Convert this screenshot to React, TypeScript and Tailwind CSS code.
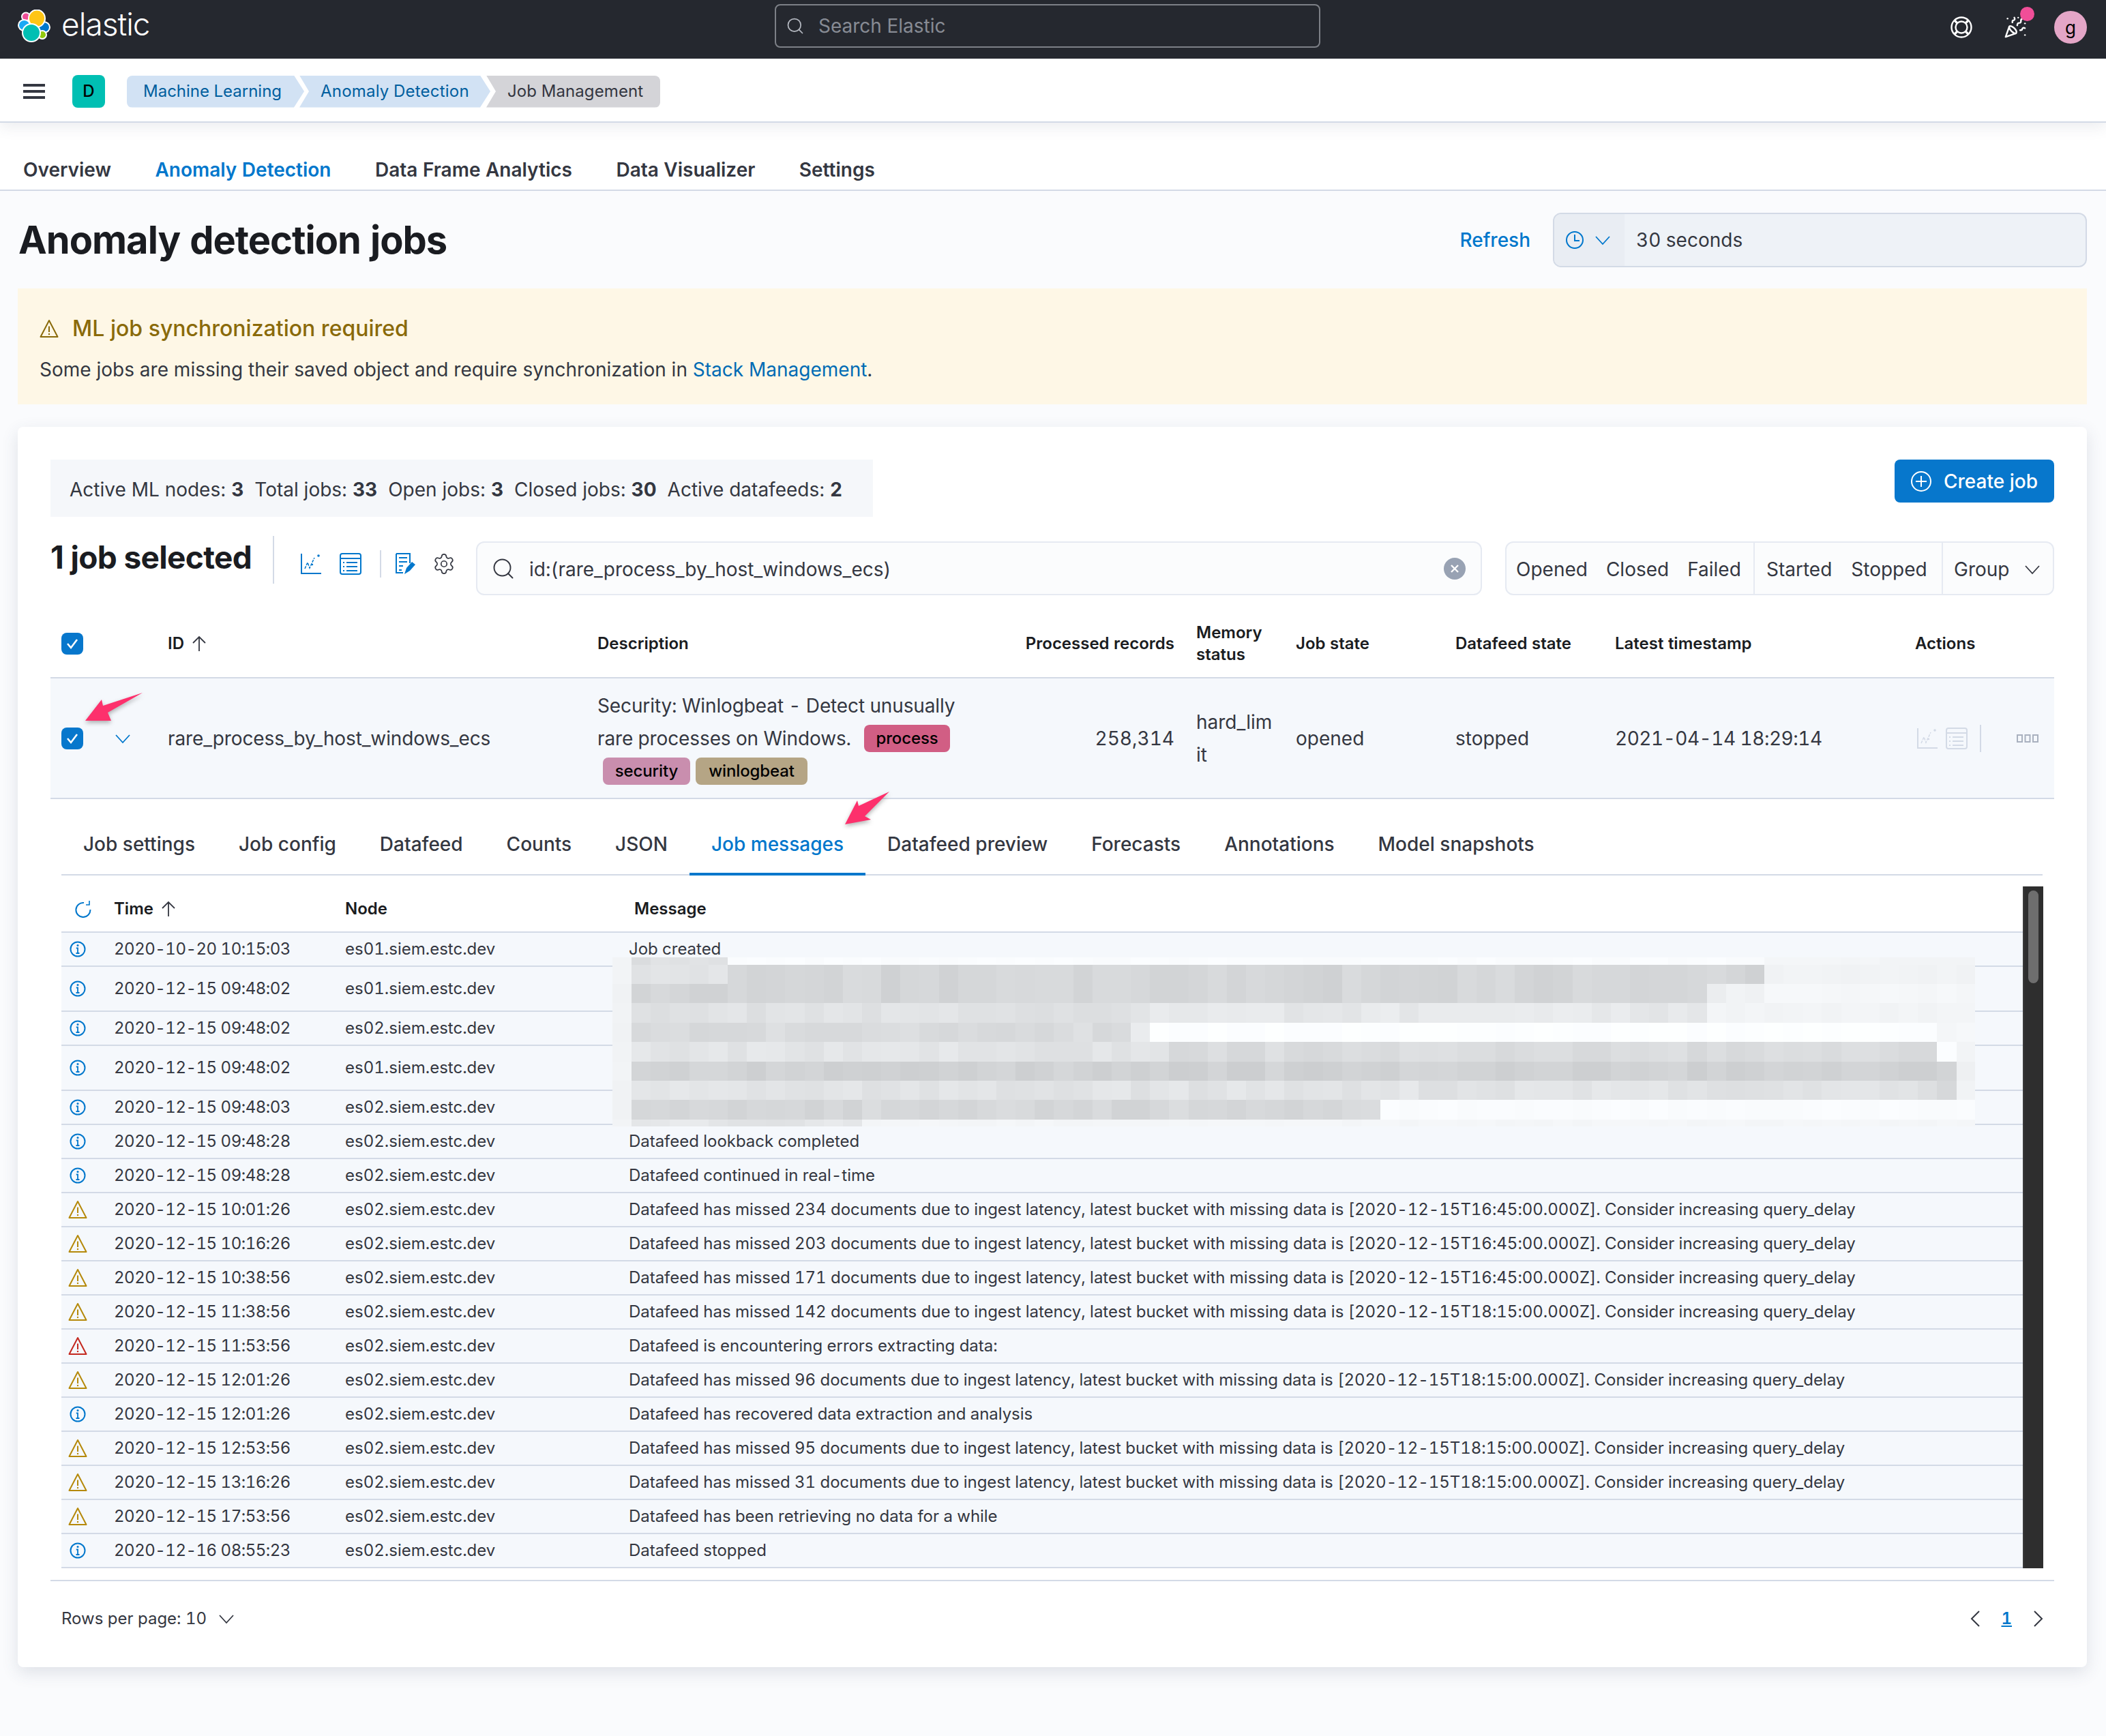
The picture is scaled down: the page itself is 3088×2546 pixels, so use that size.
import React from "react";
import { PartyPopper, Settings, Search } from "lucide-react";

const Chevron = ({ c = "#343741", s = 24 }: { c?: string; s?: number }) => (
  <svg width={s} height={s} viewBox="0 0 24 24" fill="none" stroke={c} strokeWidth="1.8"><path d="M2 7l10 11L22 7" /></svg>
);
const SortUp = () => (
  <svg width="24" height="24" viewBox="0 0 24 24" fill="none" stroke="#343741" strokeWidth="1.8"><path d="M12 2v21M3 11l9-9 9 9" /></svg>
);
const Info = () => (
  <svg width="24" height="24" viewBox="0 0 24 24" fill="none" stroke="#0077cc" strokeWidth="2">
    <circle cx="12" cy="12" r="10.5" />
    <path d="M9.8 10.5H12V18M9.5 18h5" strokeWidth="1.8" />
    <circle cx="12" cy="6.6" r="1.5" fill="#0077cc" stroke="none" />
  </svg>
);
const Triangle = ({ c, w = 28 }: { c: string; w?: number }) => (
  <svg width={w} height={w} viewBox="0 0 28 28" fill="none" stroke={c} strokeWidth="2" strokeLinejoin="round">
    <path d="M14 2L26.5 26H1.5z" />
    <path d="M14 10.5v8.5" />
    <circle cx="14" cy="22" r="1.2" fill={c} stroke="none" />
  </svg>
);
const ChartIcon = ({ c = "#0077cc" }: { c?: string }) => (
  <svg width="32" height="32" viewBox="0 0 32 32" fill="none" stroke={c} strokeWidth="2">
    <path d="M2 1v29h29" />
    <path d="M7 23l4-9 3 8 7-15" strokeWidth="1.5" strokeDasharray="4 1.5" />
    <circle cx="27" cy="4" r="1.8" fill={c} stroke="none" />
    <circle cx="18" cy="17" r="1.2" fill={c} stroke="none" />
  </svg>
);
const TableIcon = ({ c = "#0077cc" }: { c?: string }) => (
  <svg width="32" height="32" viewBox="0 0 32 32" fill="none" stroke={c} strokeWidth="2">
    <rect x="1" y="1" width="30" height="30" rx="3" />
    <path d="M1 8h30M10 14h16M10 20h16M10 26h16M5 14h2M5 20h2M5 26h2" />
  </svg>
);
const EditIcon = () => (
  <svg width="30" height="32" viewBox="0 0 30 32" fill="none" stroke="#0077cc" strokeWidth="2">
    <path d="M1 1h20v14M1 1v28h10" />
    <path d="M5 7h12M5 13h12M5 19h6M5 25h4" />
    <path d="M13 31l3-9 8-9 5 4-8 9z" fill="#0077cc" stroke="none" />
  </svg>
);
const Buoy = () => (
  <svg width="32" height="32" viewBox="0 0 32 32" fill="none" stroke="#fff" strokeWidth="2.4">
    <circle cx="16" cy="16" r="14.5" />
    <circle cx="16" cy="16" r="8.5" />
    <path d="M6 6l4 4M26 6l-4 4M6 26l4-4M26 26l-4-4" strokeWidth="3.2" />
  </svg>
);
const Logo = () => (
  <svg width="48" height="48" viewBox="0 0 48 48" className="shrink-0">
    <g stroke="#fff" strokeWidth="2">
      <ellipse cx="12" cy="10.5" rx="6" ry="6" fill="#f04e98" />
      <ellipse cx="9.5" cy="23" rx="8.5" ry="8" fill="#1ba9f5" />
      <ellipse cx="38" cy="26" rx="9" ry="8" fill="#0077cc" />
      <ellipse cx="36" cy="37" rx="6" ry="6" fill="#93c90e" />
      <ellipse cx="28" cy="13" rx="12" ry="12.5" fill="#fec514" />
      <ellipse cx="20" cy="34" rx="13" ry="13" fill="#00bfb3" />
    </g>
  </svg>
);

const hash = (a: number, b: number) => {
  const x = Math.sin(a * 127.1 + b * 311.7) * 43758.5453;
  return x - Math.floor(x);
};
const bands: { y: number; h: number; segs: [number, number, number][] }[] = [
  { y: 0, h: 11, segs: [[0, 1, 243], [1, 6, 222], [6, 60, 250], [60, 71, 243]] },
  { y: 11, h: 28, segs: [[0, 1, 241], [1, 6, 224], [6, 60, 212], [60, 61, 241], [61, 71, 241]] },
  { y: 39, h: 28, segs: [[0, 1, 241], [1, 57, 212], [57, 60, 236], [60, 71, 245]] },
  { y: 67, h: 29, segs: [[0, 1, 241], [1, 28, 224], [28, 57, 230], [57, 71, 242]] },
  { y: 96, h: 28, segs: [[0, 1, 241], [1, 27, 218], [27, 28, 232], [28, 69, 252], [69, 71, 245]] },
  { y: 124, h: 29, segs: [[0, 1, 241], [1, 29, 226], [29, 69, 218], [69, 70, 252], [70, 71, 241]] },
  { y: 153, h: 28, segs: [[0, 1, 241], [1, 70, 208], [70, 71, 234]] },
  { y: 181, h: 28, segs: [[0, 1, 241], [1, 69, 226], [69, 70, 214], [70, 71, 241]] },
  { y: 209, h: 29, segs: [[0, 1, 241], [1, 40, 214], [40, 71, 250]] },
  { y: 238, h: 10, segs: [[0, 1, 243], [1, 13, 228], [13, 71, 244]] },
];
const Mosaic = () => (
  <svg width="1998" height="248" viewBox="0 0 1998 248" shapeRendering="crispEdges" className="absolute left-[808px] top-[104px]">
    {bands.flatMap((b, bi) =>
      b.segs.flatMap(([s, e, g], si) =>
        Array.from({ length: e - s }, (_, k) => {
          const i = s + k;
          const n = Math.round((hash(i, bi + si) - 0.5) * (g >= 240 ? 3 : 10));
          const v = Math.min(253, g + n);
          return <rect key={`${bi}-${i}`} x={i * 28.15} y={b.y} width="28.6" height={b.h} fill={`rgb(${v},${v + 2},${v + 4})`} />;
        })
      )
    )}
  </svg>
);

const miss = (n: number, t: string) =>
  `Datafeed has missed ${n} documents due to ingest latency, latest bucket with missing data is [2020-12-15T${t}:00.000Z]. Consider increasing query_delay`;
const rows: [string, string, string, string, boolean][] = [
  ["i", "2020-10-20 10:15:03", "es01", "Job created", false],
  ["i", "2020-12-15 09:48:02", "es01", "", true],
  ["i", "2020-12-15 09:48:02", "es02", "", false],
  ["i", "2020-12-15 09:48:02", "es01", "", true],
  ["i", "2020-12-15 09:48:03", "es02", "", false],
  ["i", "2020-12-15 09:48:28", "es02", "Datafeed lookback completed", false],
  ["i", "2020-12-15 09:48:28", "es02", "Datafeed continued in real-time", false],
  ["w", "2020-12-15 10:01:26", "es02", miss(234, "16:45"), false],
  ["w", "2020-12-15 10:16:26", "es02", miss(203, "16:45"), false],
  ["w", "2020-12-15 10:38:56", "es02", miss(171, "16:45"), false],
  ["w", "2020-12-15 11:38:56", "es02", miss(142, "18:15"), false],
  ["e", "2020-12-15 11:53:56", "es02", "Datafeed is encountering errors extracting data:", false],
  ["w", "2020-12-15 12:01:26", "es02", miss(96, "18:15"), false],
  ["i", "2020-12-15 12:01:26", "es02", "Datafeed has recovered data extraction and analysis", false],
  ["w", "2020-12-15 12:53:56", "es02", miss(95, "18:15"), false],
  ["w", "2020-12-15 13:16:26", "es02", miss(31, "18:15"), false],
  ["w", "2020-12-15 17:53:56", "es02", "Datafeed has been retrieving no data for a while", false],
  ["i", "2020-12-16 08:55:23", "es02", "Datafeed stopped", false],
];
const subTabs = ["Job settings", "Job config", "Datafeed", "Counts", "JSON", "Job messages", "Datafeed preview", "Forecasts", "Annotations", "Model snapshots"];

const Check = () => (
  <div className="w-[32px] h-[32px] rounded-[8px] bg-[#0777cc] flex items-center justify-center">
    <svg width="20" height="20" viewBox="0 0 20 20" fill="none" stroke="#fff" strokeWidth="2.6"><path d="M3 10l5 6 9-12" /></svg>
  </div>
);

export default function App() {
  return (
    <div className="relative w-[3088px] h-[2546px] overflow-hidden bg-[#fafbfd] text-[#343741] tabular-nums [font-family:Inter,sans-serif]">
      {/* top bar */}
      <div className="h-[86px] bg-[#25282f] flex items-center">
        <div className="w-[1136px] pl-[26px] -mt-[10px] flex items-center gap-[16px]">
          <Logo />
          <span className="text-white text-[46px] font-light leading-none -mt-[6px] tracking-[-1px]">elastic</span>
        </div>
        <div className="w-[800px] h-[64px] -mt-[10px] border-2 border-[#7d8087] rounded-[8px] flex items-center pl-[14px] gap-[20px]">
          <Search size={28} strokeWidth={1.5} color="#b4b8c0" />
          <span className="text-[28px] text-[#878b94]">Search Elastic</span>
        </div>
        <div className="flex-1 -mt-[6px] flex items-center justify-end pr-[28px]">
          <Buoy />
          <div className="relative ml-[46px] mr-[40px]">
            <PartyPopper size={34} strokeWidth={1.7} color="#fff" />
            <div className="absolute -top-[13px] left-[24px] w-[21px] h-[21px] rounded-full bg-[#f04e98]" />
          </div>
          <div className="w-[48px] h-[48px] rounded-full bg-[#e4a6c7] flex items-center justify-center text-[26px] text-black">g</div>
        </div>
      </div>

      {/* breadcrumbs */}
      <div className="relative z-10 h-[94px] pt-[4px] bg-white border-b-2 border-[#d3dae6] shadow-[0_6px_20px_rgba(60,70,100,0.1)] flex items-center pl-[34px]">
        <div className="w-[32px] flex flex-col gap-[5px]">
          <div className="h-[4px] bg-[#343741]" />
          <div className="h-[4px] bg-[#343741]" />
          <div className="h-[4px] bg-[#343741]" />
        </div>
        <div className="ml-[40px] w-[48px] h-[48px] rounded-[8px] bg-[#00bfb3] flex items-center justify-center text-[24px] font-medium text-black">D</div>
        <div className="ml-[32px] flex items-center h-[47px] text-[24px]">
          <div className="w-[260px] h-full pl-[24px] flex items-center bg-[#d2e2f4] text-[#005e9e] rounded-l-[8px] [clip-path:polygon(0_0,245px_0,100%_50%,245px_100%,0_100%)]">Machine Learning</div>
          <div className="-ml-[7px] w-[280px] h-full pl-[31px] flex items-center bg-[#d2e2f4] text-[#005e9e] tracking-[0.2px] [clip-path:polygon(0_0,265px_0,100%_50%,265px_100%,0_100%,14px_50%)]">Anomaly Detection</div>
          <div className="-ml-[6px] w-[255px] h-full pl-[31px] flex items-center bg-[#d4d4d8] tracking-[0.1px] rounded-r-[8px] [clip-path:polygon(0_0,100%_0,100%_100%,0_100%,14px_50%)]">Job Management</div>
        </div>
      </div>

      {/* main tabs */}
      <div className="h-[100px] bg-white border-b-2 border-[#d3dae6] flex items-end gap-[64.5px] px-[34px] pb-[11px] text-[28px] font-semibold leading-[36px]">
        <span>Overview</span>
        <span className="text-[#0077cc]">Anomaly Detection</span>
        <span>Data Frame Analytics</span>
        <span>Data Visualizer</span>
        <span>Settings</span>
      </div>

      <div className="pl-[26px] pr-[28px]">
        {/* title */}
        <div className="h-[143px] flex items-center justify-between">
          <h1 className="text-[56px] font-bold text-[#1a1c21] tracking-[-1px] pl-[1px]">Anomaly detection jobs</h1>
          <div className="flex items-center">
            <span className="text-[28px] font-medium text-[#0077cc] mr-[33px]">Refresh</span>
            <div className="w-[783px] h-[80px] rounded-[12px] border-2 border-[#d3dae6] bg-[#eef2f7] flex items-center overflow-hidden">
              <div className="w-[103px] h-full bg-[#e9edf3] flex items-center pl-[17px] gap-[16px]">
                <svg width="26" height="26" viewBox="0 0 26 26" fill="none" stroke="#0077cc" strokeWidth="2"><circle cx="13" cy="13" r="12" /><path d="M13 5v9h7" /></svg>
                <Chevron c="#0077cc" />
              </div>
              <span className="pl-[17px] text-[28px]">30 seconds</span>
            </div>
          </div>
        </div>

        {/* callout */}
        <div className="h-[170px] bg-[#fef7e6] pl-[32px] pt-[40px]">
          <div className="flex items-center gap-[20px] h-[38px]">
            <Triangle c="#8a6a0a" />
            <span className="text-[32px] font-medium text-[#8a6a0a]">ML job synchronization required</span>
          </div>
          <div className="mt-[22px] text-[28px] leading-[38px] normal-nums">
            Some jobs are missing their saved object and require synchronization in <span className="text-[#006bb4]">Stack Management</span>.
          </div>
        </div>

        {/* panel */}
        <div className="mt-[33px] bg-white rounded-[8px] shadow-[0_8px_24px_rgba(60,70,100,0.14)] px-[48px] pt-[48px]">
          <div className="flex items-start justify-between">
            <div className="h-[84px] w-[1206px] pt-[3px] bg-[#f5f7fa] flex items-center pl-[28px] text-[28px] gap-[16px] normal-nums">
              <span>Active ML nodes: <b className="font-bold">3</b></span>
              <span>Total jobs: <b className="font-bold">33</b></span>
              <span>Open jobs: <b className="font-bold">3</b></span>
              <span>Closed jobs: <b className="font-bold">30</b></span>
              <span>Active datafeeds: <b className="font-bold">2</b></span>
            </div>
            <div className="w-[234px] h-[63px] rounded-[8px] bg-[#0777cc] flex items-center pl-[24px] gap-[18px] text-white text-[28px] font-medium">
              <svg width="30" height="30" viewBox="0 0 30 30" fill="none" stroke="#fff" strokeWidth="2"><circle cx="15" cy="15" r="14" /><path d="M15 7v16M7 15h16" /></svg>
              Create job
            </div>
          </div>

          {/* toolbar */}
          <div className="mt-[36px] h-[79px] flex items-start">
            <div className="-mt-[8px] w-[328px] h-[70px] border-r-2 border-[#d3dae6] flex items-start">
              <span className="text-[46px] font-bold text-[#1a1c21] leading-[46px] mt-[8px] tracking-[-0.65px] normal-nums">1 job selected</span>
            </div>
            <div className="w-[296px] h-[79px] pb-[14px] pl-[38px] flex items-center">
              <ChartIcon />
              <div className="ml-[26px]"><TableIcon /></div>
              <div className="ml-[27px] w-[2px] h-[40px] bg-[#d3dae6]" />
              <div className="ml-[21px]"><EditIcon /></div>
              <div className="ml-[24px]"><Settings size={34} strokeWidth={1.2} color="#343741" /></div>
            </div>
            <div className="w-[1475px] h-[79px] border-2 border-[#e6eaf2] rounded-[12px] bg-[#fbfcfd] flex items-center pl-[20px] pr-[22px]">
              <Search size={36} strokeWidth={1.3} color="#343741" className="shrink-0" />
              <span className="ml-[20px] pt-[2px] text-[28px] flex-1">id:(rare_process_by_host_windows_ecs)</span>
              <div className="w-[32px] h-[32px] rounded-full bg-[#98a2b3] flex items-center justify-center">
                <svg width="14" height="14" viewBox="0 0 14 14" stroke="#fff" strokeWidth="2.4"><path d="M2 2l10 10M12 2L2 12" /></svg>
              </div>
            </div>
            <div className="ml-[34px] flex-1 h-[79px] border-2 border-[#e6eaf2] rounded-[12px] bg-[#fbfcfd] flex items-stretch text-[28px]">
              <div className="w-[362px] pl-[14px] pt-[2px] flex items-center gap-[27px]"><span>Opened</span><span>Closed</span><span>Failed</span></div>
              <div className="w-[276px] border-l-2 border-[#e6eaf2] pl-[17px] pt-[2px] flex items-center gap-[28px]"><span>Started</span><span>Stopped</span></div>
              <div className="flex-1 border-l-2 border-[#e6eaf2] pl-[16px] pr-[18px] pt-[2px] flex items-center justify-between"><span>Group</span><Chevron /></div>
            </div>
          </div>

          {/* job table head */}
          <div className="mt-[22px] h-[100px] border-b-2 border-[#d3dae6] flex items-center pl-[16px] text-[24px] font-semibold text-[#1a1c21] leading-[32px]">
            <div className="w-[156px]"><Check /></div>
            <div className="w-[630px] flex items-center gap-[10px]">ID <SortUp /></div>
            <div className="w-[530px]">Description</div>
            <div className="w-[316px] text-right">Processed records</div>
            <div className="ml-[32px] w-[146px]">Memory<br />status</div>
            <div className="w-[234px]">Job state</div>
            <div className="w-[234px]">Datafeed state</div>
            <div className="w-[440px]">Latest timestamp</div>
            <div>Actions</div>
          </div>
          {/* job row */}
          <div className="h-[177px] bg-[#f5f8fc] border-b-2 border-[#d3dae6] flex items-center pl-[16px] text-[28px]">
            <div className="w-[78px]"><Check /></div>
            <div className="w-[78px]"><Chevron c="#0077cc" /></div>
            <div className="w-[630px] tracking-[-0.12px]">rare_process_by_host_windows_ecs</div>
            <div className="w-[530px] leading-[48px] tracking-[-0.12px]">
              <div className="h-[48px]">Security: Winlogbeat - Detect unusually</div>
              <div className="h-[48px] flex items-center">
                rare processes on Windows.
                <span className="ml-[19px] h-[40px] w-[126px] rounded-[8px] bg-[#d15e84] text-black text-[24px] font-medium flex items-center justify-center">process</span>
              </div>
              <div className="h-[48px] flex items-center gap-[8px] pl-[8px] text-black text-[24px] font-medium">
                <span className="h-[40px] w-[128px] rounded-[8px] bg-[#c98eae] flex items-center justify-center">security</span>
                <span className="h-[40px] w-[164px] rounded-[8px] bg-[#b5a585] flex items-center justify-center">winlogbeat</span>
              </div>
            </div>
            <div className="w-[316px] text-right">258,314</div>
            <div className="ml-[32px] w-[146px] leading-[48px]">hard_lim<br />it</div>
            <div className="w-[234px]">opened</div>
            <div className="w-[234px]">stopped</div>
            <div className="w-[440px] tracking-[-0.5px]">2021-04-14 18:29:14</div>
            <div className="flex items-center pl-[2px]">
              <ChartIcon c="#d3dae6" />
              <div className="ml-[11px]"><TableIcon c="#d3dae6" /></div>
              <div className="ml-[18px] w-[2px] h-[40px] bg-[#d3dae6]" />
              <svg className="ml-[52px]" width="32" height="12" viewBox="0 0 32 12" fill="none" stroke="#a9b1bf" strokeWidth="2"><rect x="1" y="1" width="7" height="10" /><rect x="12.5" y="1" width="7" height="10" /><rect x="24" y="1" width="7" height="10" /></svg>
            </div>
          </div>

          {/* sub tabs */}
          <div className="ml-[16px] w-[2905px] h-[112px] border-b-2 border-[#d3dae6] flex text-[28px] font-medium">
            {subTabs.map((t) => (
              <div key={t} className={t === "Job messages" ? "h-[112px] px-[32px] pt-[24px] flex items-center text-[#0077cc] border-b-4 border-[#0077cc]" : "h-[112px] px-[32px] pt-[20px] flex items-center"}>{t}</div>
            ))}
          </div>

          {/* messages table */}
          <div className="relative ml-[16px] mt-[16px] w-[2906px] flex">
            <div className="w-[2876px] text-[24px]">
              <div className="h-[68px] border-b-2 border-[#d3dae6] flex items-center font-semibold text-[#1a1c21]">
                <div className="w-[77px] pl-[20px]">
                  <svg width="24" height="26" viewBox="0 0 24 26" fill="none" stroke="#0077cc" strokeWidth="2"><path d="M13 4.1A10.5 10.5 0 1 0 22.4 14" /><path d="M21 1v6h-5" strokeWidth="1.6" /></svg>
                </div>
                <div className="w-[339px] flex items-center gap-[10px]">Time <SortUp /></div>
                <div className="w-[424px]">Node</div>
                <div>Message</div>
              </div>
              {rows.map(([k, time, node, msg, tall], i) => (
                <div key={i} className={tall ? "h-[66px] bg-[#f5f8fc] border-b-2 border-[#d3dae6] flex items-center" : "h-[50px] bg-[#f5f8fc] border-b-2 border-[#d3dae6] flex items-center"}>
                  <div className="w-[77px] pl-[10px] flex items-center">
                    {k === "i" ? <div className="pl-[2px]"><Info /></div> : <Triangle c={k === "w" ? "#b5890a" : "#c4281f"} />}
                  </div>
                  <div className="w-[339px] tracking-[-0.5px]">{time}</div>
                  <div className="w-[416px]">{node}.siem.estc.dev</div>
                  <div className="whitespace-nowrap tracking-[-0.03px]">{msg}</div>
                </div>
              ))}
            </div>
            <div className="w-[30px] bg-[#2e2e2e] border-l-2 border-[#3a3a3a] pt-[6px] pl-[6px]">
              <div className="w-[15px] h-[136px] rounded-full bg-[#6e6e6e]" />
            </div>
            <Mosaic />
          </div>

          {/* footer */}
          <div className="mt-[17px] h-[111px] border-t-2 border-[#d3dae6] flex items-center justify-between pl-[16px] pr-[15px] text-[24px]">
            <div className="flex items-center gap-[17px]">
              <span>Rows per page: 10</span>
              <Chevron />
            </div>
            <div className="flex items-center">
              <svg width="16" height="26" viewBox="0 0 16 26" fill="none" stroke="#343741" strokeWidth="2"><path d="M14 2L3 13l11 11" /></svg>
              <span className="ml-[30px] mr-[31px] text-[#0077cc] font-semibold underline">1</span>
              <svg width="16" height="26" viewBox="0 0 16 26" fill="none" stroke="#343741" strokeWidth="2"><path d="M2 2l11 11L2 24" /></svg>
            </div>
          </div>
          <div className="h-[17px]" />
        </div>
      </div>

      {/* annotation arrows */}
      <svg className="absolute left-[120px] top-[1010px] drop-shadow-[0_3px_3px_rgba(0,0,0,0.3)]" width="95" height="55" viewBox="0 0 95 55">
        <polygon points="89,6 31,25 29,16 5,47 43,47 38,35" fill="#fd306c" />
      </svg>
      <svg className="absolute left-[1230px] top-[1155px] drop-shadow-[0_3px_3px_rgba(0,0,0,0.3)]" width="80" height="60" viewBox="0 0 80 60">
        <polygon points="74,6 29,27 27,19 9,54 47,47 38,42" fill="#fd306c" />
      </svg>
    </div>
  );
}
